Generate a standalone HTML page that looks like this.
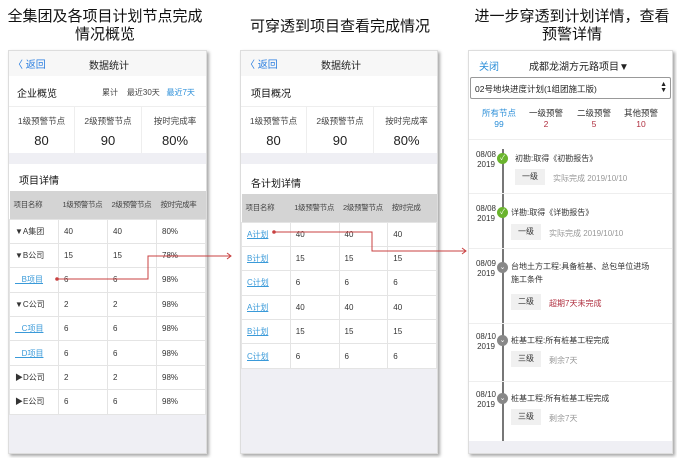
<!DOCTYPE html>
<html><head><meta charset="utf-8"><style>
*{margin:0;padding:0;box-sizing:border-box}
body{width:677px;height:458px;background:#fff;font-family:"Liberation Sans","Noto Sans CJK SC",sans-serif;position:relative;overflow:hidden;color:#333}
.t{position:absolute;font-size:15px;color:#111;text-align:center;line-height:18px}
.p{position:absolute;background:#fff;box-shadow:2px 2px 3px rgba(0,0,0,.35);border:1px solid #ddd;overflow:hidden}
.a{position:absolute}
.hd{position:absolute;left:0;right:0;top:0;height:25px;background:#f7f7f7;font-size:10px}
.gray{background:#efeff4}
table{border-collapse:collapse;position:absolute;left:0;width:100%;font-size:8px;table-layout:fixed}
td{border:1px solid #e4e4e4;padding-left:5px;height:24.4px;color:#333;white-space:nowrap}
th{background:#d4d4d4;font-weight:normal;text-align:left;padding-left:4px;height:28px;color:#444;font-size:7.5px;white-space:nowrap;letter-spacing:-0.3px}
.lk{color:#3a9ad9;text-decoration:underline}
.stat{position:absolute;top:0;height:47px;text-align:center;border-right:1px solid #eee}
.stat b{display:block;font-weight:normal;font-size:8.5px;color:#444;margin-top:8px}
.stat i{display:block;font-style:normal;font-size:13px;margin-top:6px;color:#222}
.item{position:absolute;left:0;right:0;border-top:1px solid #eee;font-size:8px}
.dt{position:absolute;left:4px;width:26px;text-align:center;font-size:8px;line-height:10px;color:#333}
.dot{position:absolute;left:28px;width:11px;height:11px;border-radius:50%;color:#fff;font-size:7px;text-align:center;line-height:11px}
.tag{position:absolute;background:#f0f0f0;width:30px;height:16px;text-align:center;line-height:16px;font-size:8px;color:#333}
</style></head><body>
<div class="t" style="left:0;top:8px;width:210px">全集团及各项目计划节点完成<br>情况概览</div>
<div class="t" style="left:238px;top:18px;width:204px">可穿透到项目查看完成情况</div>
<div class="t" style="left:466px;top:8px;width:212px">进一步穿透到计划详情，查看<br>预警详情</div>

<!-- panel 1 -->
<div class="p" style="left:8px;top:50px;width:199px;height:404px">
<div class="hd"><span class="a" style="left:4px;top:5px;color:#2a7ee0;font-size:10px">〈 返回</span><span class="a" style="left:80px;top:6px;color:#222">数据统计</span></div>
<div class="a" style="left:8px;font-size:10px;color:#111;top:34px">企业概览</div>
<div class="a" style="top:36px;left:93px;font-size:8px;color:#444">累计 &nbsp;&nbsp; 最近30天 &nbsp;&nbsp;<span style="color:#2a8ed8">最近7天</span></div>
<div class="a" style="top:55px;left:0;width:100%;height:47px;border-top:1px solid #eee">
<div class="stat" style="left:0;width:66px"><b>1级预警节点</b><i>80</i></div>
<div class="stat" style="left:66px;width:67px"><b>2级预警节点</b><i>90</i></div>
<div class="stat" style="left:133px;width:66px;border:0"><b>按时完成率</b><i>80%</i></div></div>
<div class="a gray" style="top:102px;left:0;width:100%;height:11px"></div>
<div class="a" style="top:121px;left:10px;font-size:10px;color:#111">项目详情</div>
<div class="a gray" style="top:364px;left:0;width:100%;height:40px"></div>
<table style="top:140px"><tr><th>项目名称</th><th>1级预警节点</th><th>2级预警节点</th><th>按时完成率</th></tr>
<tr><td>▼A集团</td><td>40</td><td>40</td><td>80%</td></tr>
<tr><td>▼B公司</td><td>15</td><td>15</td><td>78%</td></tr>
<tr><td class="lk">&nbsp;&nbsp;&nbsp;B项目</td><td>6</td><td>6</td><td>98%</td></tr>
<tr><td>▼C公司</td><td>2</td><td>2</td><td>98%</td></tr>
<tr><td class="lk">&nbsp;&nbsp;&nbsp;C项目</td><td>6</td><td>6</td><td>98%</td></tr>
<tr><td class="lk">&nbsp;&nbsp;&nbsp;D项目</td><td>6</td><td>6</td><td>98%</td></tr>
<tr><td>▶D公司</td><td>2</td><td>2</td><td>98%</td></tr>
<tr><td>▶E公司</td><td>6</td><td>6</td><td>98%</td></tr></table>
</div>

<!-- panel 2 -->
<div class="p" style="left:240px;top:50px;width:198px;height:404px">
<div class="hd"><span class="a" style="left:4px;top:5px;color:#2a7ee0;font-size:10px">〈 返回</span><span class="a" style="left:80px;top:6px;color:#222">数据统计</span></div>
<div class="a" style="top:34px;left:10px;font-size:10px;color:#111">项目概况</div>
<div class="a" style="top:55px;left:0;width:100%;height:47px;border-top:1px solid #eee">
<div class="stat" style="left:0;width:66px"><b>1级预警节点</b><i>80</i></div>
<div class="stat" style="left:66px;width:67px"><b>2级预警节点</b><i>90</i></div>
<div class="stat" style="left:133px;width:65px;border:0"><b>按时完成率</b><i>80%</i></div></div>
<div class="a gray" style="top:102px;left:0;width:100%;height:11px"></div>
<div class="a" style="top:124px;left:10px;font-size:10px;color:#111">各计划详情</div>
<div class="a gray" style="top:318px;left:0;width:100%;height:86px"></div>
<table style="top:143px"><tr><th>项目名称</th><th>1级预警节点</th><th>2级预警节点</th><th>按时完成</th></tr>
<tr><td class="lk">A计划</td><td>40</td><td>40</td><td>40</td></tr>
<tr><td class="lk">B计划</td><td>15</td><td>15</td><td>15</td></tr>
<tr><td class="lk">C计划</td><td>6</td><td>6</td><td>6</td></tr>
<tr><td class="lk">A计划</td><td>40</td><td>40</td><td>40</td></tr>
<tr><td class="lk">B计划</td><td>15</td><td>15</td><td>15</td></tr>
<tr><td class="lk">C计划</td><td>6</td><td>6</td><td>6</td></tr></table>
</div>

<!-- panel 3 -->
<div class="p" style="left:468px;top:50px;width:205px;height:404px">
<div class="a" style="left:10px;top:7px;font-size:10px;color:#2a8ed8">关闭</div>
<div class="a" style="left:60px;top:7px;font-size:10px;color:#222">成都龙湖方元路项目▼</div>
<div class="a" style="left:1px;top:26px;width:201px;height:22px;border:1px solid #999;border-radius:2px;font-size:8.5px;padding:5px 4px;color:#222">02号地块进度计划(1组团施工版)<span style="position:absolute;right:3px;top:4px;font-size:7px;line-height:6px">▲<br>▼</span></div>
<div class="a" style="top:57px;left:0;width:100%;font-size:8.5px;text-align:center;line-height:11px">
<span class="a" style="left:10px;width:40px;color:#2a8ed8">所有节点<br>99</span>
<span class="a" style="left:57px;width:40px;color:#333">一级预警<br><span style="color:#b03040">2</span></span>
<span class="a" style="left:105px;width:40px;color:#333">二级预警<br><span style="color:#b03040">5</span></span>
<span class="a" style="left:152px;width:40px;color:#333">其他预警<br><span style="color:#b03040">10</span></span></div>
<div class="a" style="left:33px;top:98px;width:2px;height:306px;background:#777"></div>
<div class="a gray" style="top:390px;left:0;width:100%;height:14px"></div>
<div class="item" style="top:88px;height:54px"><div class="dt" style="top:10px">08/08<br>2019</div><div class="dot" style="top:13px;background:#6ab42d">✓</div><div class="a" style="left:46px;top:13px">初勘:取得《初勘报告》</div><div class="tag" style="left:46px;top:29px">一级</div><div class="a" style="left:84px;top:33px;color:#999">实际完成 2019/10/10</div></div>
<div class="item" style="top:142px;height:55px"><div class="dt" style="top:10px">08/08<br>2019</div><div class="dot" style="top:13px;background:#6ab42d">✓</div><div class="a" style="left:42px;top:13px">详勘:取得《详勘报告》</div><div class="tag" style="left:42px;top:30px">一级</div><div class="a" style="left:80px;top:34px;color:#999">实际完成 2019/10/10</div></div>
<div class="item" style="top:197px;height:75px"><div class="dt" style="top:10px">08/09<br>2019</div><div class="dot" style="top:13px;background:#888">⌄</div><div class="a" style="left:42px;top:11px;line-height:13px">台地土方工程:具备桩基、总包单位进场<br>施工条件</div><div class="tag" style="left:42px;top:45px">二级</div><div class="a" style="left:80px;top:49px;color:#b03040">超期7天未完成</div></div>
<div class="item" style="top:272px;height:58px"><div class="dt" style="top:8px">08/10<br>2019</div><div class="dot" style="top:11px;background:#888">⌄</div><div class="a" style="left:42px;top:11px">桩基工程:所有桩基工程完成</div><div class="tag" style="left:42px;top:27px">三级</div><div class="a" style="left:80px;top:31px;color:#999">剩余7天</div></div>
<div class="item" style="top:330px;height:60px"><div class="dt" style="top:8px">08/10<br>2019</div><div class="dot" style="top:11px;background:#888">⌄</div><div class="a" style="left:42px;top:11px">桩基工程:所有桩基工程完成</div><div class="tag" style="left:42px;top:27px">三级</div><div class="a" style="left:80px;top:31px;color:#999">剩余7天</div></div>
</div>

<svg class="a" style="left:0;top:0" width="677" height="458">
<g stroke="#c84040" stroke-width="1" fill="none">
<polyline points="57,279 148,279 148,256 231,256"/>
<polyline points="227,253 231,256 227,259"/>
<polyline points="274,232 372,232 372,251 466,251"/>
<polyline points="462,248 466,251 462,254"/>
</g>
<circle cx="57" cy="279" r="1.8" fill="#c84040"/><circle cx="274" cy="232" r="1.8" fill="#c84040"/>
</svg>
</body></html>
